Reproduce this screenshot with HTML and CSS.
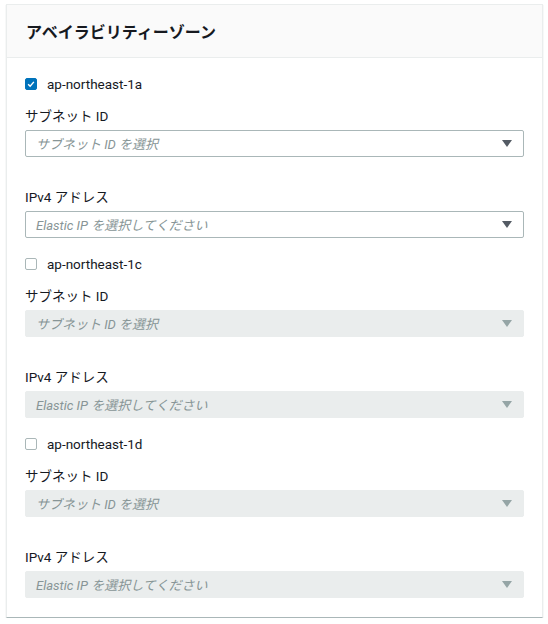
FILE: index.html
```html
<!DOCTYPE html>
<html lang="ja">
<head>
    <meta charset="UTF-8">
    <meta name="viewport" content="width=device-width, initial-scale=1">
    <title>アベイラビリティーゾーン</title>
    <link rel="stylesheet" href="styles.css">
</head>
<body>
<div class="panel">
    <div class="panel-header">
        <h2>アベイラビリティーゾーン</h2>
    </div>
    <div class="panel-body">
        <div class="zone">
            <label class="zone-check">
                <span class="box checked">
                    <svg viewBox="0 0 14 14" width="14" height="14"><path d="M3 7.2 L5.8 10 L11 4" fill="none" stroke="#fff" stroke-width="2"/></svg>
                </span>
                ap-northeast-1a
            </label>
            <div class="field">
                <div class="field-label">サブネット ID</div>
                <div class="select">
                    <span class="placeholder">サブネット ID を選択</span>
                    <span class="caret"></span>
                </div>
            </div>
            <div class="field">
                <div class="field-label">IPv4 アドレス</div>
                <div class="select">
                    <span class="placeholder">Elastic IP を選択してください</span>
                    <span class="caret"></span>
                </div>
            </div>
        </div>
        <div class="zone">
            <label class="zone-check">
                <span class="box"></span>
                ap-northeast-1c
            </label>
            <div class="field">
                <div class="field-label">サブネット ID</div>
                <div class="select disabled">
                    <span class="placeholder">サブネット ID を選択</span>
                    <span class="caret"></span>
                </div>
            </div>
            <div class="field">
                <div class="field-label">IPv4 アドレス</div>
                <div class="select disabled">
                    <span class="placeholder">Elastic IP を選択してください</span>
                    <span class="caret"></span>
                </div>
            </div>
        </div>
        <div class="zone">
            <label class="zone-check">
                <span class="box"></span>
                ap-northeast-1d
            </label>
            <div class="field">
                <div class="field-label">サブネット ID</div>
                <div class="select disabled">
                    <span class="placeholder">サブネット ID を選択</span>
                    <span class="caret"></span>
                </div>
            </div>
            <div class="field">
                <div class="field-label">IPv4 アドレス</div>
                <div class="select disabled">
                    <span class="placeholder">Elastic IP を選択してください</span>
                    <span class="caret"></span>
                </div>
            </div>
        </div>
    </div>
</div>
</body>
</html>
```

FILE: styles.css
```css
body {
    margin: 0;
    background: #fff;
    font-family: Roboto, "Noto Sans CJK JP", sans-serif;
    color: #16191f;
}

.panel {
    margin: 4px 5px 0 6px;
    border: 1px solid #eaeded;
    border-bottom-color: #aab7b8;
    background: #fff;
    box-shadow: 0 1px 1px 0 rgba(0, 28, 36, .2);
}

.panel-header {
    height: 52px;
    display: flex;
    align-items: center;
    padding: 0 19px;
    background: #fafafa;
    border-bottom: 1px solid #eaeded;
}

.panel-header h2 {
    margin: 0;
    font-size: 16px;
    font-weight: 700;
}

.panel-body {
    padding: 16px 18px 19px;
}

.zone + .zone {
    margin-top: 16px;
}

.zone-check {
    display: flex;
    align-items: center;
    gap: 10px;
    height: 20px;
    font-size: 13.5px;
}

.box {
    width: 12px;
    height: 12px;
    border: 1px solid #aab7b8;
    border-radius: 2px;
    display: flex;
    align-items: center;
    justify-content: center;
    box-sizing: border-box;
}

.box.checked {
    background: #0073bb;
    border-color: #0073bb;
}

.box svg {
    width: 10px;
    height: 10px;
}

.field {
    margin-top: 12px;
}

.field + .field {
    margin-top: 30px;
}

.field-label {
    font-size: 13.5px;
    line-height: 20px;
    margin-bottom: 4px;
}

.select {
    height: 27px;
    box-sizing: border-box;
    border: 1px solid #aab7b8;
    border-radius: 2px;
    display: flex;
    align-items: center;
    justify-content: space-between;
    padding: 0 11px 0 10px;
}

.select.disabled {
    background: #eaeded;
    border-color: #eaeded;
}

.placeholder {
    font-size: 13px;
    font-style: italic;
    color: #879596;
}

.caret {
    width: 0;
    height: 0;
    border-left: 5px solid transparent;
    border-right: 5px solid transparent;
    border-top: 7px solid #545b64;
}

.disabled .caret {
    border-top-color: #95a5a6;
}
```
